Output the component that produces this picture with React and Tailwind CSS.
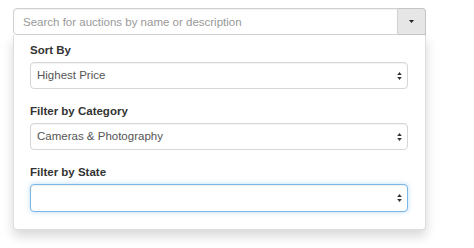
import React, { useState } from 'react';

const SelectArrows = () => (
  <svg width="5" height="9" viewBox="0 0 5 9" className="pointer-events-none absolute right-[6px] top-1/2 -translate-y-1/2">
    <path d="M2.5 0.5 L4.8 3.6 L0.2 3.6 Z" fill="#333" />
    <path d="M2.5 8.5 L4.8 5.4 L0.2 5.4 Z" fill="#333" />
  </svg>
);

const FilterSelect = ({ label, value, options, focused, first }) => (
  <div className={first ? '' : 'mt-[14px]'}>
    <label className="block h-4 leading-4 mb-1 text-[11.5px] font-bold text-[#333]">{label}</label>
    <div className="relative">
      <select
        value={value}
        onChange={() => {}}
        className={`block w-full appearance-none rounded-[4px] bg-white pl-[6px] pr-5 text-[11.5px] text-[#555] outline-none ${
          focused
            ? 'h-[28px] border border-[#7db5e3] shadow-[inset_0_1px_1px_rgba(0,0,0,0.06),0_0_5px_rgba(102,175,233,0.45)]'
            : 'h-[27px] border border-[#d6d6d6] shadow-[inset_0_1px_1px_rgba(0,0,0,0.05)]'
        }`}
      >
        {options.map((o) => (
          <option key={o}>{o}</option>
        ))}
      </select>
      <SelectArrows />
    </div>
  </div>
);

export default function App() {
  const [query, setQuery] = useState('');

  return (
    <div className="min-h-screen bg-white pl-[13px] pt-2" style={{ fontFamily: '"Liberation Sans", Arial, sans-serif' }}>
      <div className="w-[413px]">
        <div className="flex h-[27px]">
          <input
            type="text"
            value={query}
            onChange={(e) => setQuery(e.target.value)}
            placeholder="Search for auctions by name or description"
            className="flex-1 min-w-0 h-full rounded-l-[4px] border border-[#d0d0d0] bg-white px-[9px] text-[11.5px] text-[#555] placeholder:text-[#999] outline-none shadow-[inset_0_1px_1px_rgba(0,0,0,0.06)]"
          />
          <button className="flex h-full w-[28px] items-center justify-center rounded-tr-[4px] border border-l-0 border-[#c4c4c4] bg-[#e6e6e6]">
            <svg width="5" height="3" viewBox="0 0 5 3">
              <path d="M0 0 L5 0 L2.5 3 Z" fill="#222" />
            </svg>
          </button>
        </div>

        <div className="rounded-b-[4px] border border-t-0 border-[rgba(0,0,0,0.13)] bg-white pl-4 pr-[17px] pt-[7px] pb-[17px] shadow-[0_6px_12px_rgba(0,0,0,0.16)]">
          <FilterSelect first label="Sort By" value="Highest Price" options={['Highest Price', 'Lowest Price', 'Ending Soon']} />
          <FilterSelect label="Filter by Category" value="Cameras & Photography" options={['Cameras & Photography', 'Electronics', 'Books']} />
          <FilterSelect focused label="Filter by State" value="" options={['']} />
        </div>
      </div>
    </div>
  );
}
